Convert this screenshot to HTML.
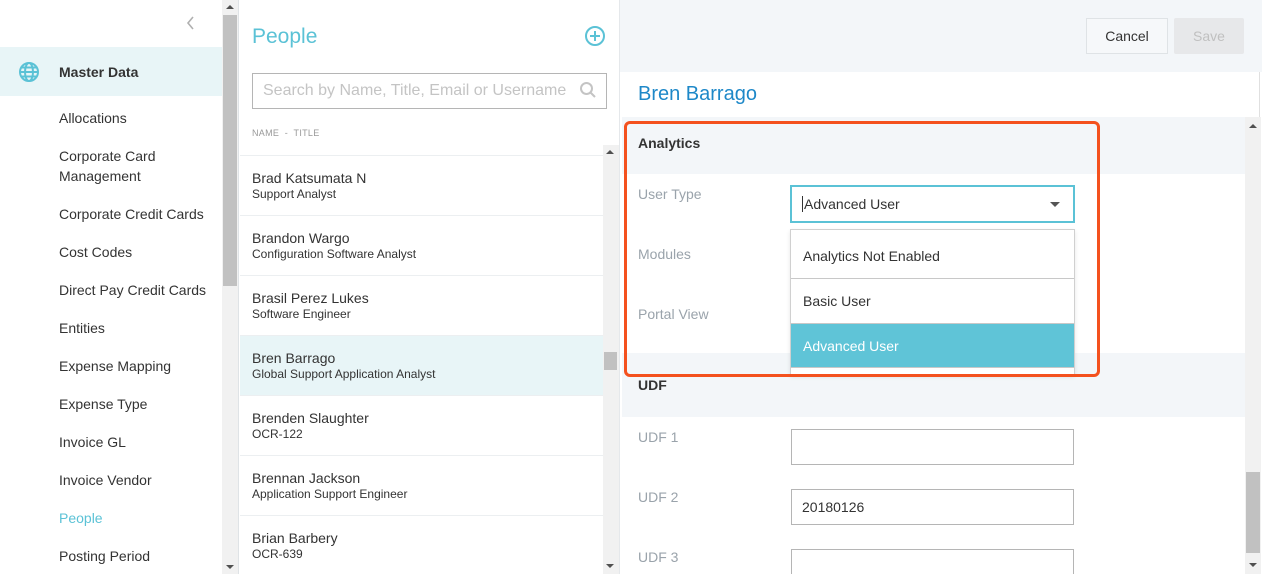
<!DOCTYPE html>
<html style="overflow:hidden;width:1262px;height:574px"><head><meta charset="utf-8"><style>
*{box-sizing:border-box;margin:0;padding:0}
body{width:1262px;height:574px;overflow:hidden;position:relative;font-family:"Liberation Sans",sans-serif;background:#fff;color:#333}
.a{position:absolute}
.nav{position:absolute;left:59px;font-size:14px;color:#333;line-height:20px}
.sb{position:absolute;background:#f1f1f1;width:16px}
.th{position:absolute;background:#c1c1c1}
.up,.dn{position:absolute;width:0;height:0;border-left:4px solid transparent;border-right:4px solid transparent}
.up{border-bottom:4px solid #505050}.dn{border-top:4px solid #505050}
.row{position:absolute;left:240px;width:363px;height:60px;border-bottom:1px solid #eceff1}
.row .n{position:absolute;left:12px;top:14px;font-size:14px;color:#333}
.row .t{position:absolute;left:12px;top:31px;font-size:12px;color:#333}
.lbl{position:absolute;left:638px;font-size:14px;color:#9aa3ab}
.inp{position:absolute;left:791px;width:283px;height:36px;border:1px solid #b5b5b5;background:#fff;font-size:14px;padding:9px 10px}
.opt{position:absolute;left:791px;width:283px;font-size:14px;padding-left:12px;border-bottom:1px solid #c8c8c8;background:#fff}
</style></head><body>
<svg class="a" style="left:186px;top:15px" width="10" height="16" viewBox="0 0 10 16"><path d="M7 2 L2 8 L7 14" stroke="#b0b0b0" stroke-width="1.6" fill="none"/></svg>
<div class="a" style="left:0;top:47px;width:222px;height:49px;background:#e8f5f7"></div>
<svg class="a" style="left:18px;top:61px" width="22" height="22" viewBox="0 0 22 22" fill="none" stroke="#5bc2d6" stroke-width="2"><circle cx="11" cy="11" r="9"/><ellipse cx="11" cy="11" rx="4" ry="9"/><path d="M2 11H20M3.5 6.5H18.5M3.5 15.5H18.5"/></svg>
<div class="a" style="left:59px;top:64px;font-size:14px;font-weight:bold;color:#333">Master Data</div>
<div class="nav" style="top:108px">Allocations</div>
<div class="nav" style="top:146px">Corporate Card<br>Management</div>
<div class="nav" style="top:204px">Corporate Credit Cards</div>
<div class="nav" style="top:242px">Cost Codes</div>
<div class="nav" style="top:280px">Direct Pay Credit Cards</div>
<div class="nav" style="top:318px">Entities</div>
<div class="nav" style="top:356px">Expense Mapping</div>
<div class="nav" style="top:394px">Expense Type</div>
<div class="nav" style="top:432px">Invoice GL</div>
<div class="nav" style="top:470px">Invoice Vendor</div>
<div class="nav" style="top:508px;color:#5bc2d6">People</div>
<div class="nav" style="top:546px">Posting Period</div>
<div class="sb" style="left:222px;top:0;height:574px"></div>
<div class="th" style="left:223px;top:15px;width:14px;height:271px"></div>
<div class="up" style="left:226px;top:5px"></div>
<div class="dn" style="left:226px;top:565px"></div>
<div class="a" style="left:238px;top:0;width:1px;height:574px;background:#dfe3e6"></div>
<div class="a" style="left:252px;top:25px;font-size:21px;color:#5bc2d6">People</div>
<svg class="a" style="left:584px;top:25px" width="22" height="22" viewBox="0 0 22 22" fill="none" stroke="#5bc2d6" stroke-width="2"><circle cx="11" cy="11" r="9"/><path d="M11 6V16M6 11H16"/></svg>
<div class="a" style="left:252px;top:73px;width:355px;height:36px;border:1px solid #b5b5b5;font-size:16px;color:#c4c4c4;padding:8px 10px;white-space:nowrap;overflow:hidden">Search by Name, Title, Email or Username</div>
<svg class="a" style="left:579px;top:81px" width="18" height="18" viewBox="0 0 18 18" fill="none" stroke="#c4c4c4" stroke-width="2"><circle cx="7.5" cy="7.5" r="5.5"/><path d="M11.5 11.5L16 16"/></svg>
<div class="a" style="left:252px;top:128px;font-size:9px;color:#999;letter-spacing:.3px">NAME &nbsp;-&nbsp; TITLE</div>
<div class="a" style="left:240px;top:155px;width:363px;height:1px;background:#eceff1"></div>
<div class="row" style="top:156px"><div class="n">Brad Katsumata N</div><div class="t">Support Analyst</div></div>
<div class="row" style="top:216px"><div class="n">Brandon Wargo</div><div class="t">Configuration Software Analyst</div></div>
<div class="row" style="top:276px"><div class="n">Brasil Perez Lukes</div><div class="t">Software Engineer</div></div>
<div class="row" style="top:336px;background:#e8f5f7"><div class="n">Bren Barrago</div><div class="t">Global Support Application Analyst</div></div>
<div class="row" style="top:396px"><div class="n">Brenden Slaughter</div><div class="t">OCR-122</div></div>
<div class="row" style="top:456px"><div class="n">Brennan Jackson</div><div class="t">Application Support Engineer</div></div>
<div class="row" style="top:516px;height:58px;border-bottom:none"><div class="n">Brian Barbery</div><div class="t">OCR-639</div></div>
<div class="sb" style="left:603px;top:145px;height:429px"></div>
<div class="th" style="left:604px;top:352px;width:13px;height:18px"></div>
<div class="up" style="left:606px;top:150px"></div>
<div class="dn" style="left:606px;top:564px"></div>
<div class="a" style="left:619px;top:0;width:1px;height:574px;background:#e5e8eb"></div>
<div class="a" style="left:620px;top:0;width:642px;height:72px;background:#f3f6f9"></div>
<div class="a" style="left:1086px;top:18px;width:82px;height:36px;border:1px solid #dfe3e6;background:#f6f8fa;font-size:14px;color:#333;text-align:center;line-height:34px">Cancel</div>
<div class="a" style="left:1174px;top:18px;width:70px;height:36px;background:#e7e8ea;font-size:14px;color:#c0c0c0;text-align:center;line-height:36px;border-radius:2px">Save</div>
<div class="a" style="left:638px;top:83px;font-size:20px;color:#1e88c8">Bren Barrago</div>
<div class="a" style="left:1259px;top:72px;width:1px;height:46px;background:#e0e0e0"></div>
<div class="a" style="left:620px;top:117px;width:642px;height:457px;background:#fff;overflow:hidden">
<div class="a" style="left:2px;top:0;width:623px;height:57px;background:#f3f6f9"></div>
<div class="a" style="left:2px;top:236px;width:623px;height:64px;background:#f3f6f9"></div>
</div>
<div class="a" style="left:638px;top:135px;font-size:14px;font-weight:bold;color:#333">Analytics</div>
<div class="lbl" style="top:186px">User Type</div>
<div class="lbl" style="top:246px">Modules</div>
<div class="lbl" style="top:306px">Portal View</div>
<div class="a" style="left:638px;top:377px;font-size:14px;font-weight:bold;color:#333">UDF</div>
<div class="lbl" style="top:429px">UDF 1</div>
<div class="lbl" style="top:489px">UDF 2</div>
<div class="lbl" style="top:549px">UDF 3</div>
<div class="inp" style="top:429px"></div>
<div class="inp" style="top:489px">20180126</div>
<div class="inp" style="top:549px;height:25px;border-bottom:none"></div>
<div class="a" style="left:790px;top:185px;width:285px;height:38px;border:2px solid #5bc2d6;background:#fff;font-size:14px;padding:9px 10px;color:#333"><span style="border-left:1px solid #333;padding-left:1px">Advanced User</span></div>
<div class="a" style="left:1050px;top:202px;width:0;height:0;border-left:5px solid transparent;border-right:5px solid transparent;border-top:5px solid #555"></div>
<div class="a" style="left:790px;top:229px;width:285px;height:146px;border:1px solid #d0d0d0;background:#fff;box-shadow:0 2px 4px rgba(0,0,0,.1)"></div>
<div class="opt" style="top:230px;height:49px;line-height:52px">Analytics Not Enabled</div>
<div class="opt" style="top:279px;height:45px;line-height:44px">Basic User</div>
<div class="opt" style="top:324px;height:44px;line-height:44px;background:#5fc4d7;color:#fff">Advanced User</div>
<div class="a" style="left:624px;top:121px;width:476px;height:256px;border:3px solid #f4511e;border-radius:6px"></div>
<div class="sb" style="left:1245px;top:117px;height:457px"></div>
<div class="th" style="left:1246px;top:472px;width:14px;height:81px"></div>
<div class="up" style="left:1249px;top:124px"></div>
<div class="dn" style="left:1249px;top:563px"></div>
</body></html>
